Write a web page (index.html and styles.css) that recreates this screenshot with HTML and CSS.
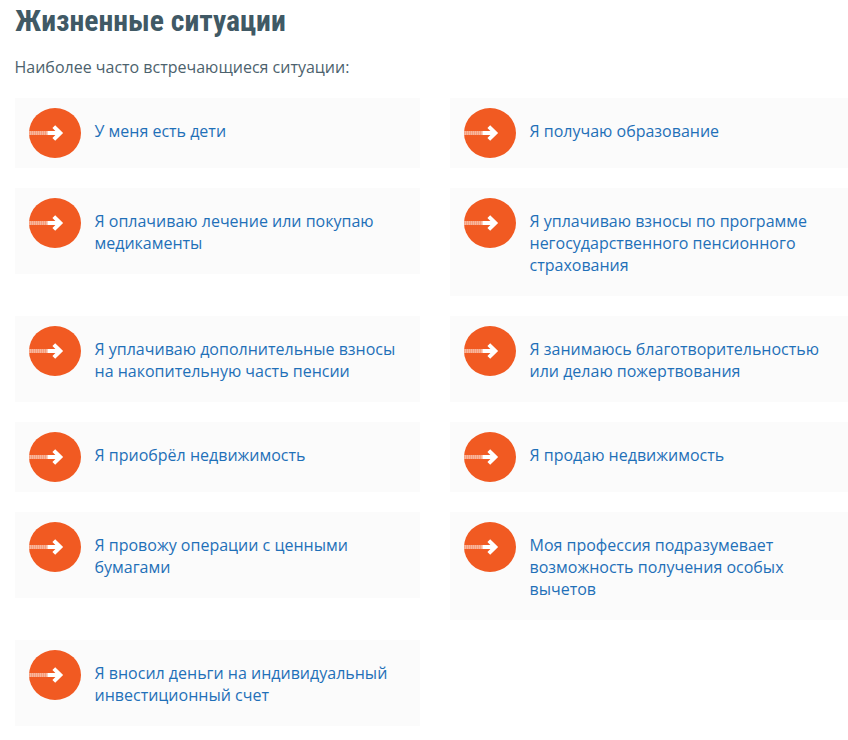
FILE: index.html
```
<!DOCTYPE html>
<html lang="ru">
  <head>
    <meta charset="utf-8">
    <title>Жизненные ситуации</title>
    <link rel="stylesheet" href="styles.css">
  </head>
  <body>
    <svg class="sprite">
      <symbol id="arrow" viewBox="0 0 52 50">
        <ellipse cx="26" cy="25" rx="26" ry="25" fill="#f15a22"/>
        <path d="M0 25H19" stroke="#fff" stroke-opacity=".4" stroke-width="4"/>
        <path d="M1 25H19" stroke="#fff" stroke-opacity=".25" stroke-width="4" stroke-dasharray="1 1"/>
        <path d="M18.5 25H31M24.8 18.6L31.3 25L24.8 31.4" fill="none" stroke="#fff" stroke-width="4"/>
      </symbol>
    </svg>

    <h1>Жизненные ситуации</h1>
    <p class="lead">Наиболее часто встречающиеся ситуации:</p>

    <div class="situations">
      <a class="item" href="#"><svg class="icon"><use href="#arrow"/></svg><span>У меня есть дети</span></a>
      <a class="item" href="#"><svg class="icon"><use href="#arrow"/></svg><span>Я получаю образование</span></a>
      <a class="item" href="#"><svg class="icon"><use href="#arrow"/></svg><span>Я оплачиваю лечение или покупаю<br>медикаменты</span></a>
      <a class="item" href="#"><svg class="icon"><use href="#arrow"/></svg><span>Я уплачиваю взносы по программе<br>негосударственного пенсионного<br>страхования</span></a>
      <a class="item" href="#"><svg class="icon"><use href="#arrow"/></svg><span>Я уплачиваю дополнительные взносы<br>на накопительную часть пенсии</span></a>
      <a class="item" href="#"><svg class="icon"><use href="#arrow"/></svg><span>Я занимаюсь благотворительностью<br>или делаю пожертвования</span></a>
      <a class="item" href="#"><svg class="icon"><use href="#arrow"/></svg><span>Я приобрёл недвижимость</span></a>
      <a class="item" href="#"><svg class="icon"><use href="#arrow"/></svg><span>Я продаю недвижимость</span></a>
      <a class="item" href="#"><svg class="icon"><use href="#arrow"/></svg><span>Я провожу операции с ценными<br>бумагами</span></a>
      <a class="item" href="#"><svg class="icon"><use href="#arrow"/></svg><span>Моя профессия подразумевает<br>возможность получения особых<br>вычетов</span></a>
      <a class="item" href="#"><svg class="icon"><use href="#arrow"/></svg><span>Я вносил деньги на индивидуальный<br>инвестиционный счет</span></a>
    </div>
  </body>
</html>
```
FILE: styles.css
```
body {
  margin: 0;
  padding: 0 0 0 15px;
  background: #fff;
  font: 16px/22px "Open Sans", sans-serif;
  color: #4c626d;
  overflow: hidden;
}
.sprite {
  display: none;
}
h1 {
  margin: 0;
  padding-top: 2px;
  font: bold 29.7px/38px "Roboto Condensed", Roboto, sans-serif;
  color: #405965;
  white-space: nowrap;
}
.lead {
  margin: 16px 0 20px -0.5px;
}
.situations {
  display: grid;
  grid-template-columns: 405px 405px;
  column-gap: 30px;
  row-gap: 20px;
  align-items: start;
}
.item {
  display: flex;
  box-sizing: border-box;
  min-height: 70px;
  padding: 10px 0 0 14px;
  background: #fbfbfb;
  color: #1f70b8;
  text-decoration: none;
}
.item span {
  padding: 12px 0 20px 13.5px;
  white-space: nowrap;
}
.icon {
  width: 52px;
  height: 50px;
  flex: none;
}
```
